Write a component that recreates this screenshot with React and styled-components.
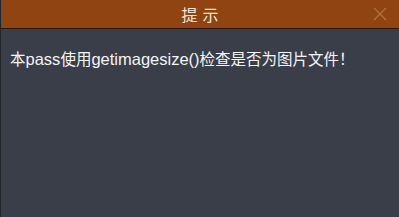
import styled, { createGlobalStyle } from 'styled-components';

const GlobalStyle = createGlobalStyle`
	html, body {
		margin: 0;
		padding: 0;
		background: #3a3e48;
	}
	body {
		font-family: "Noto Sans CJK SC", "Noto Sans", sans-serif;
	}
`

const Dialog = styled.div`
	width: 399px;
	height: 217px;
	display: flex;
	flex-direction: column;
	background: #3a3e48;
	border-left: 1px solid #23252b;
	box-sizing: border-box;
`

const Header = styled.div`
	height: 28px;
	flex-shrink: 0;
	display: flex;
	align-items: center;
	justify-content: center;
	position: relative;
	background: #8f4411;
	border-bottom: 1px solid #1f1c1a;
`

const Title = styled.h3`
	margin: 0;
	font-size: 16px;
	font-weight: normal;
	color: #f3e6dc;
	letter-spacing: 5px;
	padding-left: 5px;
`

const Close = styled.span`
	position: absolute;
	right: 12px;
	top: 7px;
	width: 14px;
	height: 14px;
	display: flex;
	opacity: 0.35;
`

const Body = styled.div`
	padding: 18px 9px;
`

const Message = styled.p`
	margin: 0;
	font-size: 15.5px;
	line-height: 22px;
	color: #f4f5f7;
`

const Latin = styled.span`
	font-family: "Liberation Sans", Arial, sans-serif;
	font-size: 16.5px;
`

export default function App() {
	return (
		<>
			<GlobalStyle />
			<Dialog>
				<Header>
					<Title>提示</Title>
					<Close>
						<svg width="14" height="14" viewBox="0 0 14 14">
							<path d="M1 1 L13 13 M13 1 L1 13" stroke="#f0c8a8" strokeWidth="1.2" />
						</svg>
					</Close>
				</Header>
				<Body>
					<Message>
						本<Latin>pass</Latin>使用<Latin>getimagesize()</Latin>检查是否为图片文件！
					</Message>
				</Body>
			</Dialog>
		</>
	)
}
